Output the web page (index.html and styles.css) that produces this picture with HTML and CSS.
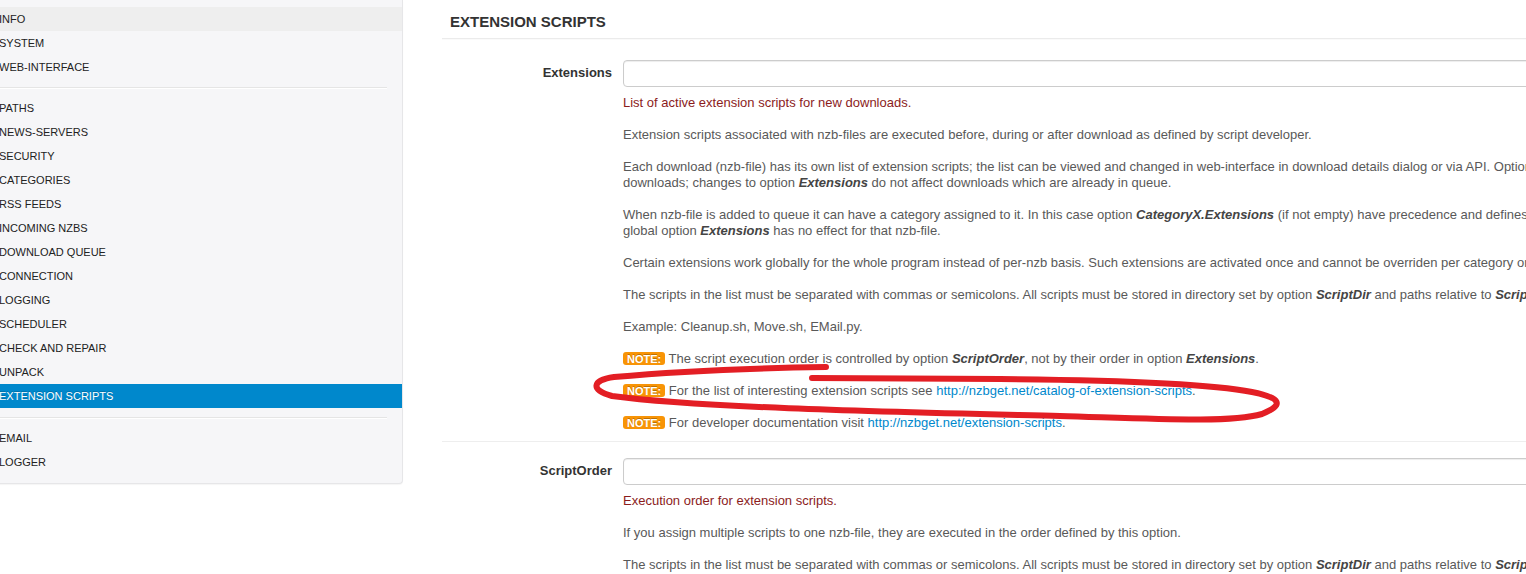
FILE: index.html
```html
<!DOCTYPE html>
<html>
<head>
<meta charset="utf-8">
<title>NZBGet Settings - Extension Scripts</title>
<link rel="stylesheet" href="styles.css">
</head>
<body>
<div class="page">
  <nav class="sidebar">
    <ul class="nav-list">
      <li class="item hover">INFO</li>
      <li class="item">SYSTEM</li>
      <li class="item">WEB-INTERFACE</li>
      <li class="divider"></li>
      <li class="item">PATHS</li>
      <li class="item">NEWS-SERVERS</li>
      <li class="item">SECURITY</li>
      <li class="item">CATEGORIES</li>
      <li class="item">RSS FEEDS</li>
      <li class="item">INCOMING NZBS</li>
      <li class="item">DOWNLOAD QUEUE</li>
      <li class="item">CONNECTION</li>
      <li class="item">LOGGING</li>
      <li class="item">SCHEDULER</li>
      <li class="item">CHECK AND REPAIR</li>
      <li class="item">UNPACK</li>
      <li class="item active">EXTENSION SCRIPTS</li>
      <li class="divider divider-low"></li>
      <li class="item">EMAIL</li>
      <li class="item">LOGGER</li>
    </ul>
  </nav>

  <main class="content">
    <h2 class="section-title">EXTENSION SCRIPTS</h2>

    <div class="option option-first">
      <label class="option-label">Extensions</label>
      <div class="controls">
        <input class="option-input" type="text">
        <p class="help-title">List of active extension scripts for new downloads.</p>
        <p class="help">Extension scripts associated with nzb-files are executed before, during or after download as defined by script developer.</p>
        <p class="help">Each download (nzb-file) has its own list of extension scripts; the list can be viewed and changed in web-interface in download details dialog or via API. Option <b><i>Extensions</i></b> sets defaults for new<br>downloads; changes to option <b><i>Extensions</i></b> do not affect downloads which are already in queue.</p>
        <p class="help">When nzb-file is added to queue it can have a category assigned to it. In this case option <b><i>CategoryX.Extensions</i></b> (if not empty) have precedence and defines extensions for that nzb-file; the<br>global option <b><i>Extensions</i></b> has no effect for that nzb-file.</p>
        <p class="help">Certain extensions work globally for the whole program instead of per-nzb basis. Such extensions are activated once and cannot be overriden per category or per nzb.</p>
        <p class="help">The scripts in the list must be separated with commas or semicolons. All scripts must be stored in directory set by option <b><i>ScriptDir</i></b> and paths relative to <b><i>ScriptDir</i></b> must be entered.</p>
        <p class="help">Example: Cleanup.sh, Move.sh, EMail.py.</p>
        <p class="help"><span class="note">NOTE:</span> The script execution order is controlled by option <b><i>ScriptOrder</i></b>, not by their order in option <b><i>Extensions</i></b>.</p>
        <p class="help"><span class="note">NOTE:</span> For the list of interesting extension scripts see <a class="link" href="#">http://nzbget.net/catalog-of-extension-scripts</a>.</p>
        <p class="help"><span class="note">NOTE:</span> For developer documentation visit <a class="link" href="#">http://nzbget.net/extension-scripts</a>.</p>
      </div>
    </div>

    <div class="option">
      <label class="option-label">ScriptOrder</label>
      <div class="controls">
        <input class="option-input" type="text">
        <p class="help-title">Execution order for extension scripts.</p>
        <p class="help">If you assign multiple scripts to one nzb-file, they are executed in the order defined by this option.</p>
        <p class="help">The scripts in the list must be separated with commas or semicolons. All scripts must be stored in directory set by option <b><i>ScriptDir</i></b> and paths relative to <b><i>ScriptDir</i></b> must be entered.</p>
      </div>
    </div>
  </main>
</div>

<svg class="annotation" width="1526" height="574" viewBox="0 0 1526 574">
  <path d="M 826 367 C 760 368, 680 371, 614 377 C 592 380, 590 390, 612 396 C 700 408, 900 412, 1060 416 C 1160 419, 1230 423, 1262 414 C 1284 405, 1282 398, 1252 392 C 1212 384, 1120 380, 1000 379 C 920 378, 860 378, 812 378" fill="none" stroke="#e31e24" stroke-width="6" stroke-linecap="round" stroke-linejoin="round"/>
</svg>
</body>
</html>
```

FILE: styles.css
```css
html, body {
  margin: 0;
  padding: 0;
  overflow: hidden;
  background: #ffffff;
}

body {
  font-family: "Liberation Sans", Arial, sans-serif;
  font-size: 13px;
  line-height: 16px;
  color: #333333;
  position: relative;
  width: 1526px;
  height: 574px;
}

.page {
  display: flex;
  align-items: flex-start;
}

/* ---------- sidebar ---------- */
.sidebar {
  flex: none;
  box-sizing: border-box;
  width: 420px;
  margin-left: -17px;
  padding: 7px 15px 9px;
  background: #f6f6f8;
  border: 1px solid #e6e6e8;
  border-top-width: 0;
  border-radius: 0 0 4px 4px;
  box-shadow: 0 1px 1px rgba(0, 0, 0, 0.04);
}

.nav-list {
  list-style: none;
  margin: 0;
  padding: 0;
}

.item {
  margin: 0 -15px;
  padding: 0 15px;
  height: 24px;
  line-height: 24px;
  font-size: 11px;
  color: #222222;
  white-space: nowrap;
}

.item.hover {
  background: #eeeeee;
}

.item.active {
  background: #0088cc;
  color: #ffffff;
  text-shadow: 0 -1px 0 rgba(0, 0, 0, 0.2);
}

.divider {
  height: 1px;
  margin: 8px 0 7px;
  background: #e5e5e5;
  border-bottom: 1px solid #ffffff;
}

.divider-low {
  margin: 9px 0 7px;
}

/* ---------- content ---------- */
.content {
  flex: none;
  width: 1400px;
  margin-left: 39px;
}

.section-title {
  margin: 0;
  padding: 6px 0 0 8px;
  height: 32px;
  line-height: 32px;
  font-size: 15px;
  font-weight: bold;
  color: #333333;
  border-bottom: 1px solid #ebebeb;
  box-shadow: 0 1px 1px rgba(0, 0, 0, 0.02);
}

.option {
  display: grid;
  grid-template-columns: 170px 1140px;
  column-gap: 11px;
  padding-top: 16px;
}

.option-first {
  padding-top: 21px;
  padding-bottom: 10px;
  border-bottom: 1px solid #eeeeee;
}

.option-label {
  padding-top: 5px;
  text-align: right;
  font-weight: bold;
  color: #333333;
}

.controls {
  min-width: 0;
}

.option-input {
  display: block;
  box-sizing: border-box;
  width: 100%;
  height: 27px;
  margin: 0;
  padding: 4px 6px;
  border: 1px solid #cccccc;
  border-radius: 4px;
  background: #ffffff;
  box-shadow: inset 0 1px 1px rgba(0, 0, 0, 0.075);
  font-family: inherit;
  font-size: 13px;
}

.help-title {
  margin: 8px 0 0;
  color: #8b1c1c;
}

.help {
  margin: 16px 0 0;
  color: #595959;
}

.help b {
  color: #444444;
}

.note {
  padding: 1px 4px 0;
  border-radius: 3px;
  background: #f89406;
  color: #ffffff;
  font-size: 11px;
  font-weight: bold;
  text-shadow: 0 -1px 0 rgba(0, 0, 0, 0.25);
}

.link {
  color: #0088cc;
  text-decoration: none;
}

/* ---------- hand-drawn annotation overlay ---------- */
.annotation {
  position: absolute;
  left: 0;
  top: 0;
  pointer-events: none;
}
```
